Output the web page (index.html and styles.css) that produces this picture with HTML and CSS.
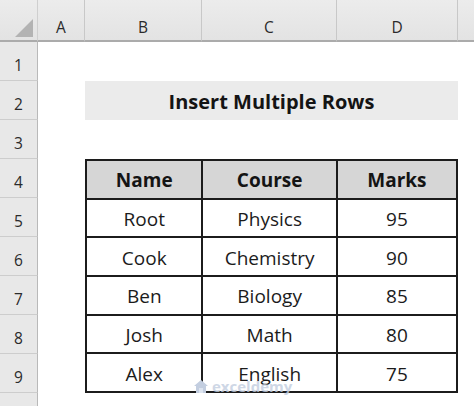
FILE: index.html
```html
<!DOCTYPE html>
<html>
<head>
<meta charset="utf-8">
<link rel="stylesheet" href="styles.css">
</head>
<body>
<div class="sheet">
  <div class="corner"><span class="tri"></span></div>
  <div class="colhead">A</div>
  <div class="colhead">B</div>
  <div class="colhead">C</div>
  <div class="colhead">D</div>
  <div class="colhead last"></div>

  <div class="rowhead r1">1</div>
  <div class="rowhead r2">2</div>
  <div class="rowhead r3">3</div>
  <div class="rowhead r4">4</div>
  <div class="rowhead r5">5</div>
  <div class="rowhead r6">6</div>
  <div class="rowhead r7">7</div>
  <div class="rowhead r8">8</div>
  <div class="rowhead r9">9</div>
  <div class="rowhead r10"></div>

  <div class="title">Insert Multiple Rows</div>

  <table class="data">
    <colgroup><col class="c1"><col class="c2"><col class="c3"></colgroup>
    <tr class="head"><td>Name</td><td>Course</td><td>Marks</td></tr>
    <tr><td>Root</td><td>Physics</td><td>95</td></tr>
    <tr><td>Cook</td><td>Chemistry</td><td>90</td></tr>
    <tr><td>Ben</td><td>Biology</td><td>85</td></tr>
    <tr><td>Josh</td><td>Math</td><td>80</td></tr>
    <tr><td>Alex</td><td>English</td><td>75</td></tr>
  </table>

  <div class="watermark">
    <svg width="16" height="15" viewBox="0 0 16 15"><path d="M8 1 L15 7 L13 7 L13 14 L3 14 L3 7 L1 7 Z" fill="#c3cee0"/><rect x="6" y="9" width="4" height="5" fill="#dde4ef"/></svg>
    <span class="wm-text">exceldemy</span>
  </div>
</div>
</body>
</html>
```
FILE: styles.css
```css
html, body {
  margin: 0;
  padding: 0;
  background: #ffffff;
}
body {
  font-family: "Open Sans", Lato, sans-serif;
  color: #1b1b1b;
  width: 474px;
  height: 406px;
  overflow: hidden;
}
.sheet {
  position: relative;
  display: grid;
  grid-template-columns: 38px 47px 117px 135px 121px 16px;
  grid-template-rows: 42px repeat(9, 39px) 13px;
}
.corner {
  grid-row: 1;
  grid-column: 1;
  background: linear-gradient(#ececec, #e3e3e3);
  border-bottom: 2px solid #ababab;
  border-right: 1px solid #cfcfcf;
  box-sizing: border-box;
  position: relative;
}
.tri {
  position: absolute;
  left: 15px;
  top: 19px;
  width: 0;
  height: 0;
  border-left: 18px solid transparent;
  border-bottom: 18px solid #b3b3b3;
}
.colhead {
  grid-row: 1;
  background: linear-gradient(#ececec, #e3e3e3);
  border-bottom: 2px solid #ababab;
  border-right: 1px solid #c8c8c8;
  box-sizing: border-box;
  display: flex;
  align-items: center;
  justify-content: center;
  padding-top: 14px;
  font-size: 15.5px;
  color: #2b2b2b;
}
.colhead.last {
  border-right: none;
}
.rowhead {
  grid-column: 1;
  background: #e8e8e8;
  border-bottom: 1px solid #cdcdcd;
  border-right: 1px solid #b9b9b9;
  box-sizing: border-box;
  display: flex;
  align-items: center;
  justify-content: center;
  padding-top: 8px;
  font-size: 15.5px;
  color: #2b2b2b;
}
.r1 { grid-row: 2; }
.r2 { grid-row: 3; }
.r3 { grid-row: 4; }
.r4 { grid-row: 5; }
.r5 { grid-row: 6; }
.r6 { grid-row: 7; }
.r7 { grid-row: 8; }
.r8 { grid-row: 9; }
.r9 { grid-row: 10; }
.r10 { grid-row: 11; border-bottom: none; }

.title {
  grid-row: 3;
  grid-column: 3 / 6;
  background: #ebebeb;
  display: flex;
  align-items: center;
  justify-content: center;
  padding-top: 2px;
  font-weight: bold;
  font-size: 20px;
  color: #141414;
}
.data {
  grid-row: 5 / 11;
  grid-column: 3 / 6;
  border-collapse: collapse;
  width: 100%;
  height: 100%;
  table-layout: fixed;
}
.c1 { width: 31.4%; }
.c2 { width: 36.2%; }
.c3 { width: 32.4%; }
.data td {
  border: 2px solid #1c1c1c;
  text-align: center;
  vertical-align: middle;
  padding: 2px 0 0 0;
  font-size: 19px;
  color: #1b1b1b;
}
.data tr.head td {
  background: #d6d6d6;
  font-weight: bold;
  color: #141414;
}

.watermark {
  position: absolute;
  left: 193px;
  top: 378px;
  display: flex;
  align-items: center;
  gap: 3px;
  pointer-events: none;
}
.wm-text {
  font-weight: bold;
  font-size: 15px;
  line-height: 16px;
  color: #c3cee0;
  opacity: 0.8;
}
```
